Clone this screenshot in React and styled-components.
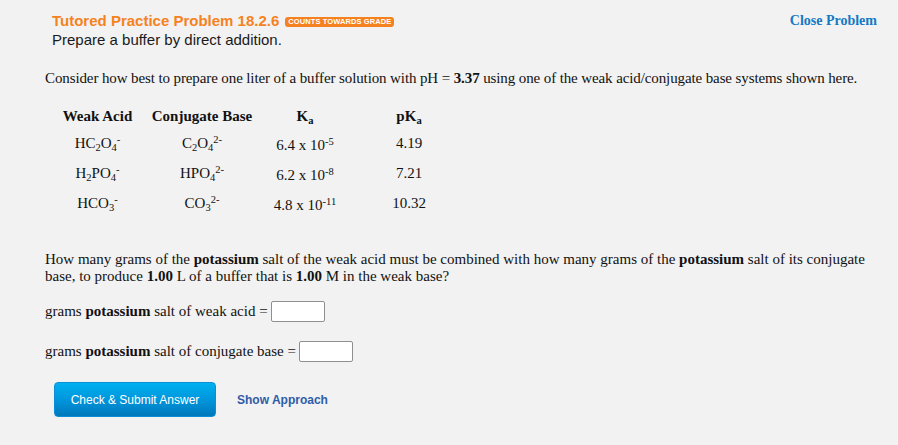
import React from 'react';
import styled, { createGlobalStyle } from 'styled-components';

const GlobalStyle = createGlobalStyle`
  html, body {
    margin: 0;
    padding: 0;
    background: #f2f2f2;
  }
`;

const Page = styled.div`
  width: 898px;
  height: 445px;
  background: #f2f2f2;
  font-family: "Liberation Serif", "Times New Roman", serif;
  color: #111;
  box-sizing: border-box;
  overflow: hidden;
`;

const Header = styled.div`
  display: flex;
  justify-content: space-between;
  align-items: flex-start;
  padding: 11px 21px 0 52px;
`;

const TitleBlock = styled.div`
  font-family: "Liberation Sans", Arial, sans-serif;
`;

const TitleRow = styled.div`
  display: flex;
  align-items: center;
  gap: 6px;
  line-height: 19px;
`;

const Title = styled.span`
  color: #f5821f;
  font-size: 15px;
  font-weight: bold;
`;

const Badge = styled.span`
  background: #f5821f;
  color: #fff;
  font-size: 7.5px;
  font-weight: bold;
  border-radius: 3px;
  padding: 1px 3px;
  line-height: 8px;
  letter-spacing: 0.1px;
  margin-top: 2px;
`;

const Subtitle = styled.div`
  font-size: 15px;
  line-height: 19px;
  color: #1a1a1a;
`;

const CloseLink = styled.a`
  font-family: "Liberation Serif", "Times New Roman", serif;
  font-weight: bold;
  font-size: 14px;
  color: #1479c4;
  text-decoration: none;
  line-height: 19px;
`;

const Content = styled.div`
  padding: 0 21px 0 45px;
  font-size: 15px;
`;

const Para = styled.p`
  margin: ${p => p.$top || 0}px 0 0;
  line-height: 17px;
  letter-spacing: ${p => p.$tight ? '-0.11px' : 'normal'};
`;

const Table = styled.table`
  border-collapse: collapse;
  margin: 17px 0 0 10px;
`;

const Th = styled.th`
  font-weight: bold;
  text-align: center;
  padding: 0;
  height: 24px;
  width: ${p => p.$w}px;
  vertical-align: middle;
`;

const Td = styled.td`
  text-align: center;
  box-sizing: border-box;
  height: 30px;
  vertical-align: middle;
  padding: ${p => p.$low ? '4px 0 0' : '0'};
`;

const Sub = styled.sub`
  font-size: 10.5px;
  vertical-align: -3px;
  line-height: 0;
`;

const Sup = styled.sup`
  font-size: 10.5px;
  vertical-align: 5px;
  line-height: 0;
`;

const AnswerRow = styled.div`
  display: flex;
  align-items: center;
  gap: 3px;
  margin-top: ${p => p.$top}px;
  line-height: 21px;
`;

const AnswerInput = styled.input`
  width: 54px;
  height: 21px;
  box-sizing: border-box;
  border: 1px solid #8f8f8f;
  border-radius: 2px;
  background: #fff;
  padding: 0 3px;
  margin: 0;
`;

const Actions = styled.div`
  display: flex;
  align-items: center;
  gap: 21px;
  margin: 20px 0 0 9px;
`;

const SubmitButton = styled.button`
  width: 162px;
  height: 35px;
  border: 1px solid #0a8fd6;
  border-radius: 4px;
  background: linear-gradient(to bottom, #00b0f0 0%, #0096dc 50%, #0078bc 100%);
  color: #fff;
  font-family: "Liberation Sans", Arial, sans-serif;
  font-size: 12px;
  cursor: pointer;
  padding: 0;
`;

const ApproachLink = styled.a`
  font-family: "Liberation Sans", Arial, sans-serif;
  font-size: 12px;
  font-weight: bold;
  color: #2f5ca8;
  text-decoration: none;
`;

const rows = [
  {
    acid: <>HC<Sub>2</Sub>O<Sub>4</Sub><Sup>-</Sup></>,
    base: <>C<Sub>2</Sub>O<Sub>4</Sub><Sup>2-</Sup></>,
    ka: <>6.4 x 10<Sup>-5</Sup></>,
    pka: '4.19',
  },
  {
    acid: <>H<Sub>2</Sub>PO<Sub>4</Sub><Sup>-</Sup></>,
    base: <>HPO<Sub>4</Sub><Sup>2-</Sup></>,
    ka: <>6.2 x 10<Sup>-8</Sup></>,
    pka: '7.21',
  },
  {
    acid: <>HCO<Sub>3</Sub><Sup>-</Sup></>,
    base: <>CO<Sub>3</Sub><Sup>2-</Sup></>,
    ka: <>4.8 x 10<Sup>-11</Sup></>,
    pka: '10.32',
  },
];

export default function App() {
  return (
    <Page>
      <GlobalStyle />
      <Header>
        <TitleBlock>
          <TitleRow>
            <Title>Tutored Practice Problem 18.2.6</Title>
            <Badge>COUNTS TOWARDS GRADE</Badge>
          </TitleRow>
          <Subtitle>Prepare a buffer by direct addition.</Subtitle>
        </TitleBlock>
        <CloseLink href="#">Close Problem</CloseLink>
      </Header>

      <Content>
        <Para $top={21} $tight>
          Consider how best to prepare one liter of a buffer solution with pH = <b>3.37</b> using one of the weak acid/conjugate base systems shown here.
        </Para>

        <Table>
          <thead>
            <tr>
              <Th $w={85}>Weak Acid</Th>
              <Th $w={124}>Conjugate Base</Th>
              <Th $w={82}>K<Sub>a</Sub></Th>
              <Th $w={126}>pK<Sub>a</Sub></Th>
            </tr>
          </thead>
          <tbody>
            {rows.map((r, i) => (
              <tr key={i}>
                <Td>{r.acid}</Td>
                <Td>{r.base}</Td>
                <Td $low>{r.ka}</Td>
                <Td>{r.pka}</Td>
              </tr>
            ))}
          </tbody>
        </Table>

        <Para $top={33}>
          How many grams of the <b>potassium</b> salt of the weak acid must be combined with how many grams of the <b>potassium</b> salt of its conjugate base, to produce <b>1.00</b> L of a buffer that is <b>1.00</b> M in the weak base?
        </Para>

        <AnswerRow $top={16}>
          <span>grams <b>potassium</b> salt of weak acid =</span>
          <AnswerInput type="text" />
        </AnswerRow>

        <AnswerRow $top={19}>
          <span>grams <b>potassium</b> salt of conjugate base =</span>
          <AnswerInput type="text" />
        </AnswerRow>

        <Actions>
          <SubmitButton>Check &amp; Submit Answer</SubmitButton>
          <ApproachLink href="#">Show Approach</ApproachLink>
        </Actions>
      </Content>
    </Page>
  );
}
